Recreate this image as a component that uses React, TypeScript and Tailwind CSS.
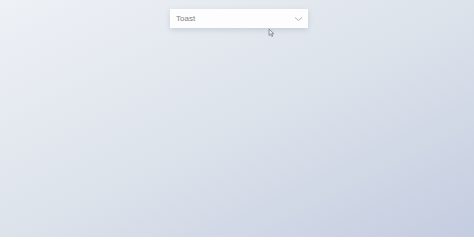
import React from 'react';

export default function App() {
    return (
        <div className="relative w-full h-[237px] overflow-hidden bg-gradient-to-br from-[#eef1f6] via-[#dde3eb] to-[#c4cce0] font-['Liberation_Sans',sans-serif]">
            <div className="flex justify-center pt-[9px]">
                <div className="flex items-center justify-between w-[138px] h-[19px] ml-[4px] pl-[6px] pr-[5px] bg-[#fdfdfe] shadow-[0_2px_5px_rgba(120,130,150,0.25)]">
                    <span className="text-[8px] leading-none pt-[1px] text-[#7f8185]">Toast</span>
                    <svg width="9" height="6" viewBox="0 0 9 6" fill="none" stroke="#a8acb3" strokeWidth="0.9">
                        <path d="M1 1.5 L4.5 4.5 L8 1.5" />
                    </svg>
                </div>
            </div>
            {/* mouse pointer */}
            <svg className="absolute left-[268px] top-[28px]" width="7" height="9" viewBox="0 0 7 9">
                <path d="M1 1 L1 7.5 L2.6 6 L3.8 8.5 L4.8 8 L3.7 5.6 L5.8 5.6 Z" fill="#eceef2" stroke="#7a7e86" strokeWidth="0.8" />
            </svg>
        </div>
    );
}
